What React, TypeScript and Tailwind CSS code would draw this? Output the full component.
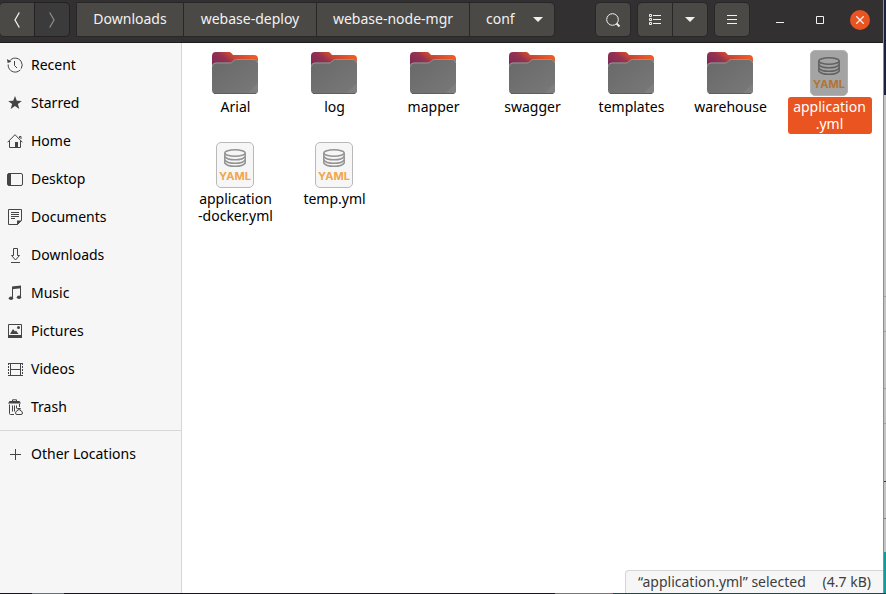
import type { ReactNode } from "react";
import clsx from "clsx";

type Place = { label: string; icon: ReactNode };
type Entry = { name: string; kind: "folder" | "yaml"; selected?: boolean };

function Glyph({ children }: { children: ReactNode }) {
  return (
    <svg viewBox="0 0 16 16" className="size-4 shrink-0" fill="none" stroke="currentColor" aria-hidden="true">
      {children}
    </svg>
  );
}

const places: Place[] = [
  {
    label: "Recent",
    icon: (
      <Glyph>
        <path d="M2.500 4A7 7 0 1 1 1.200 7.500" strokeDasharray="21 1.500" />
        <path d="M7.500 4v4.500l2.500 2.500" />
        <path d="M0 2l.6 4L4.400 4.800z" fill="currentColor" stroke="none" />
      </Glyph>
    ),
  },
  {
    label: "Starred",
    icon: (
      <Glyph>
        <path d="M8 1l1.800 4.700 5 .2-3.900 3.100 1.400 4.900L8 11.100l-4.300 2.800L5.100 9 1.200 5.900l5-.2z" fill="currentColor" stroke="none" />
      </Glyph>
    ),
  },
  {
    label: "Home",
    icon: (
      <Glyph>
        <path d="M.6 9.300L8 1.700l7.400 7.600M2.500 8v6.500h11V8M12.500 5V3.500h1.500V6" />
        <path d="M8 9h3v6H8z" fill="currentColor" stroke="none" />
      </Glyph>
    ),
  },
  {
    label: "Desktop",
    icon: (
      <Glyph>
        <rect x=".5" y="2.500" width="15" height="12" rx="1.500" />
        <path d="M1 2.500h3v12H1z" fill="currentColor" stroke="none" />
      </Glyph>
    ),
  },
  {
    label: "Documents",
    icon: (
      <Glyph>
        <path d="M1.500.5h13v11l-4 4h-9z" />
        <path d="M4 3.500h8M4 5.500h8M4 7.500h8M4 9.500h4" />
        <path d="M10 16v-4.500h5z" fill="currentColor" stroke="none" />
      </Glyph>
    ),
  },
  {
    label: "Downloads",
    icon: (
      <Glyph>
        <path d="M6.500 1.500h4v7h2L8.500 13l-4-4.500h2zM4 15.500h9" />
      </Glyph>
    ),
  },
  {
    label: "Music",
    icon: (
      <Glyph>
        <path d="M5.500 13V2.500l8-1V12" />
        <path d="M5 1.500L14 .5v2.800l-9 1z" fill="currentColor" stroke="none" />
        <ellipse cx="4" cy="13.200" rx="2.200" ry="1.800" fill="currentColor" stroke="none" />
        <ellipse cx="12" cy="12.200" rx="2.200" ry="1.800" fill="currentColor" stroke="none" />
      </Glyph>
    ),
  },
  {
    label: "Pictures",
    icon: (
      <Glyph>
        <path d="M1.500 1.500h13v13h-13z" />
        <path d="M1 12h14v3H1zM3 11l3-5 2 2.500 1-1 2.500 3.500z" fill="currentColor" stroke="none" />
        <circle cx="11.500" cy="4.500" r="1.500" fill="currentColor" stroke="none" />
      </Glyph>
    ),
  },
  {
    label: "Videos",
    icon: (
      <Glyph>
        <path d="M3.500 2v13M13.500 2v13M1 2.500h15M1 14.500h15M4 8.500h9" />
        <path d="M1.500 2v13M15.500 2v13" strokeDasharray="2 1" />
      </Glyph>
    ),
  },
  {
    label: "Trash",
    icon: (
      <Glyph>
        <path d="M2.500 5.500v9q0 1 1 1H7M12.500 5v3M5.500 6.500v6M7.500 6.500v6M9.500 6.500v3" />
        <path d="M5.500 3V.8h4V3" />
        <path d="M1 4.500L2.500 2h10L14 4.500z" fill="currentColor" stroke="none" />
        <path d="M10.500 9.500h3l-1 1.500q3 1 3 3 0 1.500-1.500 1.500h-4q-1.500 0-1.500-1.500 0-2 3-3z" />
      </Glyph>
    ),
  },
];

const crumbs = [
  { label: "Downloads", width: "w-[107px]" },
  { label: "webase-deploy", width: "w-[133px]" },
  { label: "webase-node-mgr", width: "w-[153px]" },
];

// Long names are broken by hand so that they fit under the icon
const entries: Entry[] = [
  { name: "Arial", kind: "folder" },
  { name: "log", kind: "folder" },
  { name: "mapper", kind: "folder" },
  { name: "swagger", kind: "folder" },
  { name: "templates", kind: "folder" },
  { name: "warehouse", kind: "folder" },
  { name: "application\n.yml", kind: "yaml", selected: true },
  { name: "application\n-docker.yml", kind: "yaml" },
  { name: "temp.yml", kind: "yaml" },
];

const toolButton =
  "flex h-[33px] items-center justify-center bg-[#4a4946] text-[#f2f1f0] shadow-[0_0_0_1px_#282627] hover:bg-[#555451]";

function Caret() {
  return (
    <svg viewBox="0 0 10 5" className="h-[5px] w-2.5" fill="currentColor" aria-hidden="true">
      <path d="M0 0h10L5 5z" />
    </svg>
  );
}

function FolderIcon() {
  return (
    <svg viewBox="1 0 47 48" className="h-12 w-[47px]" aria-hidden="true">
      <defs>
        <linearGradient id="folder-back" x1="0" y1="1" x2="1" y2="0.6">
          <stop offset="0" stopColor="#78265a" />
          <stop offset="0.45" stopColor="#963350" />
          <stop offset="0.6" stopColor="#c04436" />
          <stop offset="1" stopColor="#ee5a24" />
        </linearGradient>
        <linearGradient id="folder-front" x1="0" y1="0" x2="1" y2="1">
          <stop offset="0" stopColor="#686868" />
          <stop offset="1" stopColor="#797979" />
        </linearGradient>
      </defs>
      <path d="M5 3h13q1.500 0 2.500 1.200L22 6h21q4 0 4 4v8H1V7q0-4 4-4z" fill="url(#folder-back)" />
      <path d="M5 13.500h14q1.500 0 2.500-1l1.500-1.500q1-1 2.500-1H43q4 0 4 4v27q0 4-4 4H5q-4 0-4-4V17.500q0-4 4-4z" fill="url(#folder-front)" />
      <path d="M1.500 17.500q0-3.500 3.500-3.500h14q1.500 0 2.500-1l1.500-1.500q1-1 2.500-1H43q3.500 0 3.500 3.500" fill="none" stroke="#959391" />
      <path d="M36 45l11-11v7q0 4-4 4z" fill="#7f7f7f" />
      <path d="M3 44.500h42" stroke="#5f5f5f" />
    </svg>
  );
}

function YamlIcon({ selected }: { selected?: boolean }) {
  return (
    <svg viewBox="1 0 47 48" className="h-12 w-[47px]" aria-hidden="true">
      <rect x="5.500" y="1.500" width="37" height="45" rx="4.500" fill={selected ? "#a4a4a4" : "#f6f6f6"} stroke={selected ? "#b2b2b2" : "#b9b9b9"} />
      <g fill="none" stroke={selected ? "#626262" : "#949494"} strokeWidth="1.500">
        <ellipse cx="24" cy="12" rx="10.200" ry="3.300" />
        <path d="M13.800 12v10q2 3.300 10.200 3.300T34.200 22V12" />
        <path d="M13.800 15.500q2 3.300 10.200 3.300t10.200-3.300M13.800 19q2 3.300 10.200 3.300T34.200 19" />
      </g>
      <text
        x="24"
        y="39"
        textAnchor="middle"
        className={clsx("font-['Inter',sans-serif] text-[11px] font-bold", selected ? "fill-[#b37432]" : "fill-[#f2a54a]")}
      >
        YAML
      </text>
    </svg>
  );
}

function TitleBar() {
  return (
    <header className="flex h-[43px] shrink-0 items-start border-b border-[#1d1b1c] bg-[#323031] pt-[3px] text-[#f2f1f0]">
      <nav className="flex gap-px" aria-label="History">
        <button aria-label="Back" className={clsx(toolButton, "w-[34px] rounded-l")}>
          <svg viewBox="0 0 6 16" className="h-4 w-1.5" fill="none" stroke="currentColor" strokeWidth="1.300">
            <path d="M5.300.5L1 8l4.300 7.500" />
          </svg>
        </button>
        <button aria-label="Forward" disabled className="flex h-[33px] w-[34px] items-center justify-center rounded-r bg-[#3c3b3b] text-[#8b8a89] shadow-[0_0_0_1px_#232122]">
          <svg viewBox="0 0 6 16" className="h-4 w-1.5" fill="none" stroke="currentColor" strokeWidth="1.300">
            <path d="M.7.500L5 8 .7 15.500" />
          </svg>
        </button>
      </nav>

      <nav className="ml-2 flex" aria-label="Path">
        {crumbs.map((crumb) => (
          <button key={crumb.label} className={clsx(toolButton, crumb.width, "border-r border-[#2c2a2b] pb-0.5")}>
            {crumb.label}
          </button>
        ))}
        <button className={clsx(toolButton, "gap-[18px] rounded-r pr-[11px] pl-4")}>
          <span className="pb-0.5">conf</span>
          <Caret />
        </button>
      </nav>

      <div className="ml-auto flex gap-2">
        <button aria-label="Search" className={clsx(toolButton, "w-[34px] rounded")}>
          <Glyph>
            <circle cx="7.500" cy="7.500" r="5.800" />
            <path d="M11.500 11.500l3 3" strokeWidth="1.800" />
          </Glyph>
        </button>
        <div className="flex gap-px">
          <button aria-label="List view" className={clsx(toolButton, "w-[34px] rounded-l")}>
            <Glyph>
              <path d="M2.500 2.500h2v2h-2zM2.500 6.500h2v2h-2zM2.500 10.500h2v2h-2zM6 3.500h8M6 7.500h8M6 11.500h8" />
            </Glyph>
          </button>
          <button aria-label="View options" className={clsx(toolButton, "w-[34px] rounded-r")}>
            <Caret />
          </button>
        </div>
        <button aria-label="Menu" className={clsx(toolButton, "w-[34px] rounded")}>
          <Glyph>
            <path d="M3 3.500h10M3 7.500h10M3 11.500h10" />
          </Glyph>
        </button>
      </div>

      <div className="mr-[13px] ml-[21px] flex h-[33px] items-center gap-5">
        <button aria-label="Minimize" className="flex size-5 items-center justify-center">
          <svg viewBox="0 0 8 8" className="size-2" stroke="currentColor">
            <path d="M0 6.500h8" />
          </svg>
        </button>
        <button aria-label="Maximize" className="flex size-5 items-center justify-center">
          <svg viewBox="0 0 8 8" className="size-2" fill="none" stroke="currentColor">
            <path d="M.5.5h7v7h-7z" />
          </svg>
        </button>
        <button aria-label="Close" className="flex size-5 items-center justify-center rounded-full bg-[#e95420]">
          <svg viewBox="0 0 8 8" className="size-2" stroke="currentColor" strokeWidth="1.300">
            <path d="M.3.3l7.400 7.400M7.700.3L.3 7.700" />
          </svg>
        </button>
      </div>
    </header>
  );
}

function Sidebar() {
  return (
    <aside className="w-[182px] shrink-0 border-r border-[#d5d5d5] bg-[#f6f6f6] pt-[3px]">
      <ul>
        {places.map((place) => (
          <li key={place.label}>
            <a href="#" className="flex h-[38px] items-center gap-2 pl-[7px]">
              <span className="text-[#454545]">{place.icon}</span>
              <span className="pb-0.5">{place.label}</span>
            </a>
          </li>
        ))}
      </ul>
      <hr className="my-1 border-[#d9d9d9]" />
      <a href="#" className="flex h-[38px] items-center gap-2 pl-[7px]">
        <span className="text-[#454545]">
          <Glyph>
            <path d="M3 8.500h11M8.500 3v11" />
          </Glyph>
        </span>
        <span className="pb-0.5">Other Locations</span>
      </a>
    </aside>
  );
}

export default function App() {
  return (
    <div className="flex h-screen flex-col bg-[#17141f] font-['Noto_Sans','Open_Sans',sans-serif] text-[14px] leading-[17px] text-black">
      <div className="flex min-h-0 flex-1">
        <div className="flex min-w-0 flex-1 flex-col">
          <TitleBar />
          <div className="flex min-h-0 flex-1">
            <Sidebar />
            <main className="relative min-w-0 flex-1 bg-white px-1 pt-1.5">
              <ul className="grid grid-cols-[repeat(auto-fill,99px)] gap-y-[7px]">
                {entries.map((entry) => (
                  <li key={entry.name}>
                    <button className="flex min-h-[85px] w-full flex-col items-center">
                      {entry.kind === "folder" ? <FolderIcon /> : <YamlIcon selected={entry.selected} />}
                      <span
                        className={clsx(
                          "w-[84px] rounded-[3px] pt-px pb-0.5 text-center whitespace-pre",
                          entry.selected && "bg-[#e95420] text-white"
                        )}
                      >
                        {entry.name}
                      </span>
                    </button>
                  </li>
                ))}
              </ul>
              <p
                role="status"
                className="absolute right-0 bottom-0 flex min-w-[258px] justify-between rounded-tl border-t border-l border-[#d5d5d5] bg-[#f6f6f6] px-3 pt-0.5 pb-[3px] text-[#3d3d3d]"
              >
                <span>“application.yml” selected</span>
                <span>(4.7 kB)</span>
              </p>
            </main>
          </div>
        </div>
        {/* Sliver of the desktop behind the window */}
        <div className="flex w-[3px] shrink-0 flex-col border-l border-[#8f8f8f]">
          <div className="h-[95px] bg-[#1b2140]" />
          <div className="h-[202px] border-b border-[#a0a0a0] bg-[#c4c4c4]" />
          <div className="h-[35px] border-b border-[#a0a0a0] bg-[#c4c4c4]" />
          <div className="h-[57px] border-b border-[#a0a0a0] bg-[#c4c4c4]" />
          <div className="h-[35px] border-b border-[#a0a0a0] bg-[#c4c4c4]" />
          <div className="h-[58px] border-b border-[#333333] bg-[#c4c4c4]" />
          <div className="h-[37px] border-b border-[#808080] bg-[#c4c4c4]" />
          <div className="h-[33px] bg-[#c4c4c4]" />
          <div className="flex-1 bg-[#159a9c]" />
        </div>
      </div>
      <div className="flex h-px shrink-0">
        <div className="ml-8 w-8 bg-[#687078]" />
        <div className="ml-auto w-[58px] bg-[#777777]" />
        <div className="w-[273px] bg-[#0f4f50]" />
      </div>
    </div>
  );
}
